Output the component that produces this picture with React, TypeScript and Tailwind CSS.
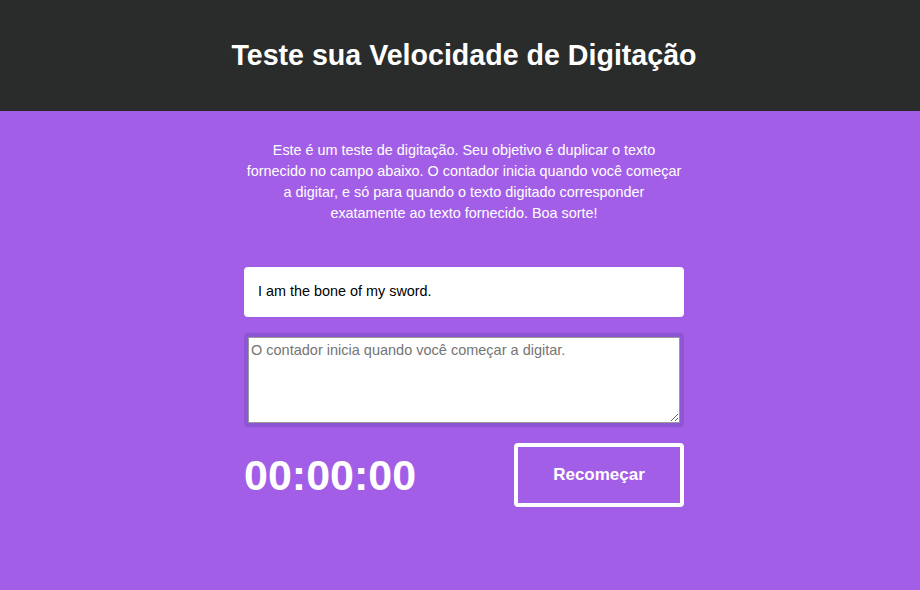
export default function App() {
  return (
    <div className="min-h-[590px] bg-[#a35ee8] font-['Liberation_Sans',Arial,sans-serif]">
      <header className="flex h-[111px] items-center justify-center bg-[#2a2c2b] pl-2">
        <h1 className="text-[28.6px] font-bold text-white">Teste sua Velocidade de Digitação</h1>
      </header>
      <main className="mx-auto w-[448px] pl-2 pt-[29px]">
        <p className="px-[1.5px] text-center text-[14.4px] leading-[21px] text-white">
          Este é um teste de digitação. Seu objetivo é duplicar o texto fornecido no campo abaixo. O
          contador inicia quando você começar a digitar, e só para quando o texto digitado
          corresponder exatamente ao texto fornecido. Boa sorte!
        </p>
        <div className="mt-[43px] flex h-[50px] items-center rounded bg-white px-[14px] text-[14.4px] text-black">
          I am the bone of my sword.
        </div>
        <div className="mt-4 rounded bg-[#8c55d4] p-1">
          <textarea
            className="block h-[86px] w-full resize-y border border-[#999] bg-white px-[2px] py-[2px] text-[14.5px] text-black placeholder:text-[#757575] outline-none"
            placeholder="O contador inicia quando você começar a digitar."
          />
        </div>
        <div className="mt-4 flex items-center justify-between">
          <div className="text-[43px] font-bold leading-none text-white">00:00:00</div>
          <button className="flex h-[64px] w-[170px] items-center justify-center rounded border-4 border-white text-[17px] font-bold text-white">
            Recomeçar
          </button>
        </div>
      </main>
    </div>
  );
}
